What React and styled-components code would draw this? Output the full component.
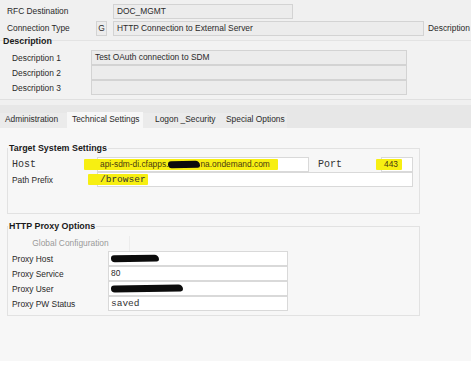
import React from "react";
import styled, { createGlobalStyle } from "styled-components";

const GlobalStyle = createGlobalStyle`
  html, body { margin: 0; padding: 0; background: #ffffff; }
`;

/* data */
const descriptions = ["Test OAuth connection to SDM", "", ""];
const tabs = [
  { title: "Administration", w: 67, pad: 5 },
  { title: "Technical Settings", w: 76, pad: 5, active: true },
  { title: "Logon _Security", w: 76, pad: 12 },
  { title: "Special Options", w: 68, pad: 7 },
];
const proxyRows = [
  { label: "Proxy Host", value: "", redact: 48 },
  { label: "Proxy Service", value: "80" },
  { label: "Proxy User", value: "", redact: 72 },
  { label: "Proxy PW Status", value: "saved", mono: true },
];

const App = () => {
  return (
    <Screen>
      <GlobalStyle />
      <HeaderRow top={3}>
        <Label w={106}>RFC Destination</Label>
        <Field w={180}>DOC_MGMT</Field>
      </HeaderRow>
      <HeaderRow top={1}>
        <Label w={89}>Connection Type</Label>
        <KeyBox>G</KeyBox>
        <Field w={311}>HTTP Connection to External Server</Field>
        <SideText>Description</SideText>
      </HeaderRow>

      <DescSection>
        <Heading>Description</Heading>
        {descriptions.map((d, i) => (
          <DescRow key={`desc-${i}`}>
            <Label w={79}>Description {i + 1}</Label>
            <Field w={316}>{d}</Field>
          </DescRow>
        ))}
      </DescSection>

      <TabStrip>
        {tabs.map((t) => (
          <Tab key={t.title} active={t.active} w={t.w} pad={t.pad}>
            {t.title}
          </Tab>
        ))}
      </TabStrip>

      <TabBody>
        <Group top={13} h={73}>
          <Legend>Target System Settings</Legend>
          <FormRow>
            <MonoLabel w={85}>Host</MonoLabel>
            <InputBox w={212}>
              <Marker left={-14} w={194} />
              <HostText>
                api-sdm-di.cfapps.
                <Redact w={32} />
                na.ondemand.com
              </HostText>
            </InputBox>
            <MonoLabel w={72} pad={9}>Port</MonoLabel>
            <InputBox w={32}>
              <Marker left={-6} w={26} />
              <HostText>443</HostText>
            </InputBox>
          </FormRow>
          <FormRow>
            <Label w={85}>Path Prefix</Label>
            <InputBox w={316}>
              <Marker left={-10} w={60} />
              <MonoText>/browser</MonoText>
            </InputBox>
          </FormRow>
        </Group>

        <Group top={5} h={97}>
          <Legend>HTTP Proxy Options</Legend>
          <GlobalButton>Global Configuration</GlobalButton>
          {proxyRows.map((r) => (
            <FormRow key={r.label}>
              <Label w={96}>{r.label}</Label>
              <InputBox w={180}>
                {r.redact ? <Redact w={r.redact} /> : null}
                {r.mono ? <MonoText>{r.value}</MonoText> : r.value}
              </InputBox>
            </FormRow>
          ))}
        </Group>
      </TabBody>
    </Screen>
  );
};

const Screen = styled.div`
  width: 471px;
  height: 361px;
  background: #f0f0f0;
  display: flex;
  flex-direction: column;
  overflow: hidden;
  font-family: "Liberation Sans", Arial, sans-serif;
  font-size: 8.4px;
  color: #2a2a2a;
`;

const HeaderRow = styled.div`
  display: flex;
  align-items: center;
  height: 16px;
  margin-top: ${(p) => p.top}px;
  padding-left: 7px;
`;

const Label = styled.div`
  width: ${(p) => p.w}px;
  flex: none;
  white-space: nowrap;
`;

const Field = styled.div`
  box-sizing: border-box;
  width: ${(p) => p.w}px;
  height: 15px;
  flex: none;
  background: #ececec;
  border: 1px solid #d3d3d3;
  padding-left: 3px;
  line-height: 13px;
  white-space: nowrap;
  overflow: hidden;
`;

const KeyBox = styled(Field)`
  width: 11px;
  padding: 0;
  margin-right: 6px;
  text-align: center;
`;

const SideText = styled.div`
  margin-left: 4px;
  white-space: nowrap;
`;

const DescSection = styled.div`
  margin-top: 4px;
  height: 58px;
  padding-left: 12px;
  background: #f2f2f2;
  border-top: 1px solid #e3e3e3;
  border-bottom: 1px solid #e0e0e0;
`;

const Heading = styled.div`
  font-weight: bold;
  font-size: 8.9px;
  margin: -5px 0 0 -9px;
  height: 14px;
  color: #1a1a1a;
`;

const DescRow = styled.div`
  display: flex;
  align-items: center;
  height: 15px;
`;

const TabStrip = styled.div`
  margin-top: 5px;
  height: 23px;
  display: flex;
  align-items: flex-end;
  background: #e7e7e7;
`;

const Tab = styled.div`
  width: ${(p) => p.w}px;
  box-sizing: border-box;
  height: ${(p) => (p.active ? 16 : 15)}px;
  line-height: ${(p) => (p.active ? 14 : 13)}px;
  padding-left: ${(p) => p.pad}px;
  white-space: nowrap;
  background: ${(p) => (p.active ? "#f7f7f7" : "#ebebeb")};
  color: #2a2a2a;
`;

const TabBody = styled.div`
  flex: 1;
  background: #f7f7f7;
  padding-left: 7px;
`;

const Group = styled.fieldset`
  box-sizing: border-box;
  width: 413px;
  height: ${(p) => p.h}px;
  margin: ${(p) => p.top}px 0 0 0;
  padding: 0 0 0 4px;
  border: 1px solid #e2e2e2;
  min-inline-size: 0;
`;

const Legend = styled.legend`
  font-weight: bold;
  font-size: 8.9px;
  padding: 0 1px;
  margin-left: -4px;
  line-height: 14px;
  color: #1a1a1a;
`;

const FormRow = styled.div`
  display: flex;
  align-items: center;
  height: 15px;
  &:first-of-type {
    margin-top: 2px;
  }
`;

const MonoLabel = styled.div`
  width: ${(p) => p.w}px;
  padding-left: ${(p) => p.pad || 0}px;
  box-sizing: border-box;
  flex: none;
  font-family: "Liberation Mono", "Courier New", monospace;
  font-size: 10px;
  color: #333;
`;

const InputBox = styled.div`
  position: relative;
  box-sizing: border-box;
  width: ${(p) => p.w}px;
  height: 15px;
  flex: none;
  background: #ffffff;
  border: 1px solid #d9d9d9;
  padding-left: 2px;
  line-height: 13px;
  white-space: nowrap;
  display: flex;
  align-items: center;
`;

const Marker = styled.span`
  position: absolute;
  left: ${(p) => p.left}px;
  top: 1px;
  width: ${(p) => p.w}px;
  height: 11px;
  background: #f7ef12;
  border-radius: 1px;
`;

const HostText = styled.span`
  position: relative;
  display: flex;
  align-items: center;
  color: #4a3a10;
`;

const MonoText = styled.span`
  position: relative;
  font-family: "Liberation Mono", "Courier New", monospace;
  font-size: 9.5px;
  color: #333;
`;

const Redact = styled.span`
  display: inline-block;
  width: ${(p) => p.w}px;
  height: 7px;
  background: #0c0c0c;
  border-radius: 4px 6px 3px 5px;
  transform: rotate(-1deg);
`;

const GlobalButton = styled.div`
  width: 118px;
  height: 15px;
  margin-top: 3px;
  line-height: 15px;
  text-align: center;
  color: #9a9a9a;
  border-right: 1px solid #ececec;
  box-sizing: border-box;
`;

export default App;
